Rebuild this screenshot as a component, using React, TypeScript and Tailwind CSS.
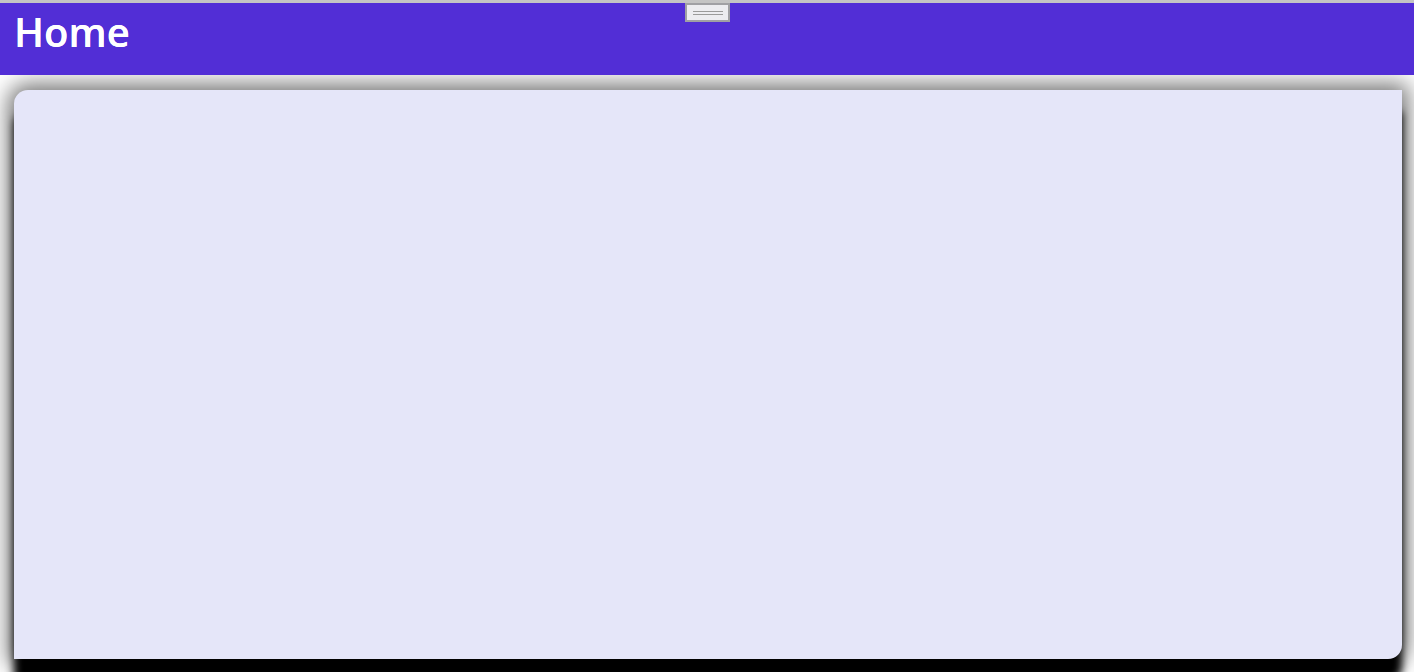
import React from "react";

export default function App() {
  return (
    <div className="w-[1414px] h-[672px] overflow-hidden bg-white flex flex-col" style={{ fontFamily: '"Open Sans", "Noto Sans", sans-serif' }}>
      <div className="h-[3px] bg-[#c4c4c4] shrink-0" />
      <div className="relative h-[72px] shrink-0 bg-[#522ed6] px-[14px] flex items-start">
        <h1 className="text-white font-semibold text-[40px] leading-none mt-[9px] [text-shadow:0_0_0.6px_white]">Home</h1>
        <div className="absolute left-[685px] top-0 w-[45px] h-[19px] border-2 border-[#a0a0a4] bg-[#ececf0] flex flex-col items-center justify-center gap-[2px]">
          <div className="w-[30px] h-px bg-[#9a9a9a]" />
          <div className="w-[30px] h-px bg-[#9a9a9a]" />
        </div>
      </div>
      <div className="flex-1 pt-[15px] pl-[14px] pr-[12px]">
        <div className="h-[569px] bg-[#e5e6f9] rounded-tl-[14px] rounded-br-[14px] shadow-[0_0_22px_6px_rgba(0,0,0,0.55),0_22px_8px_0_rgba(0,0,0,1)]" />
      </div>
    </div>
  );
}
